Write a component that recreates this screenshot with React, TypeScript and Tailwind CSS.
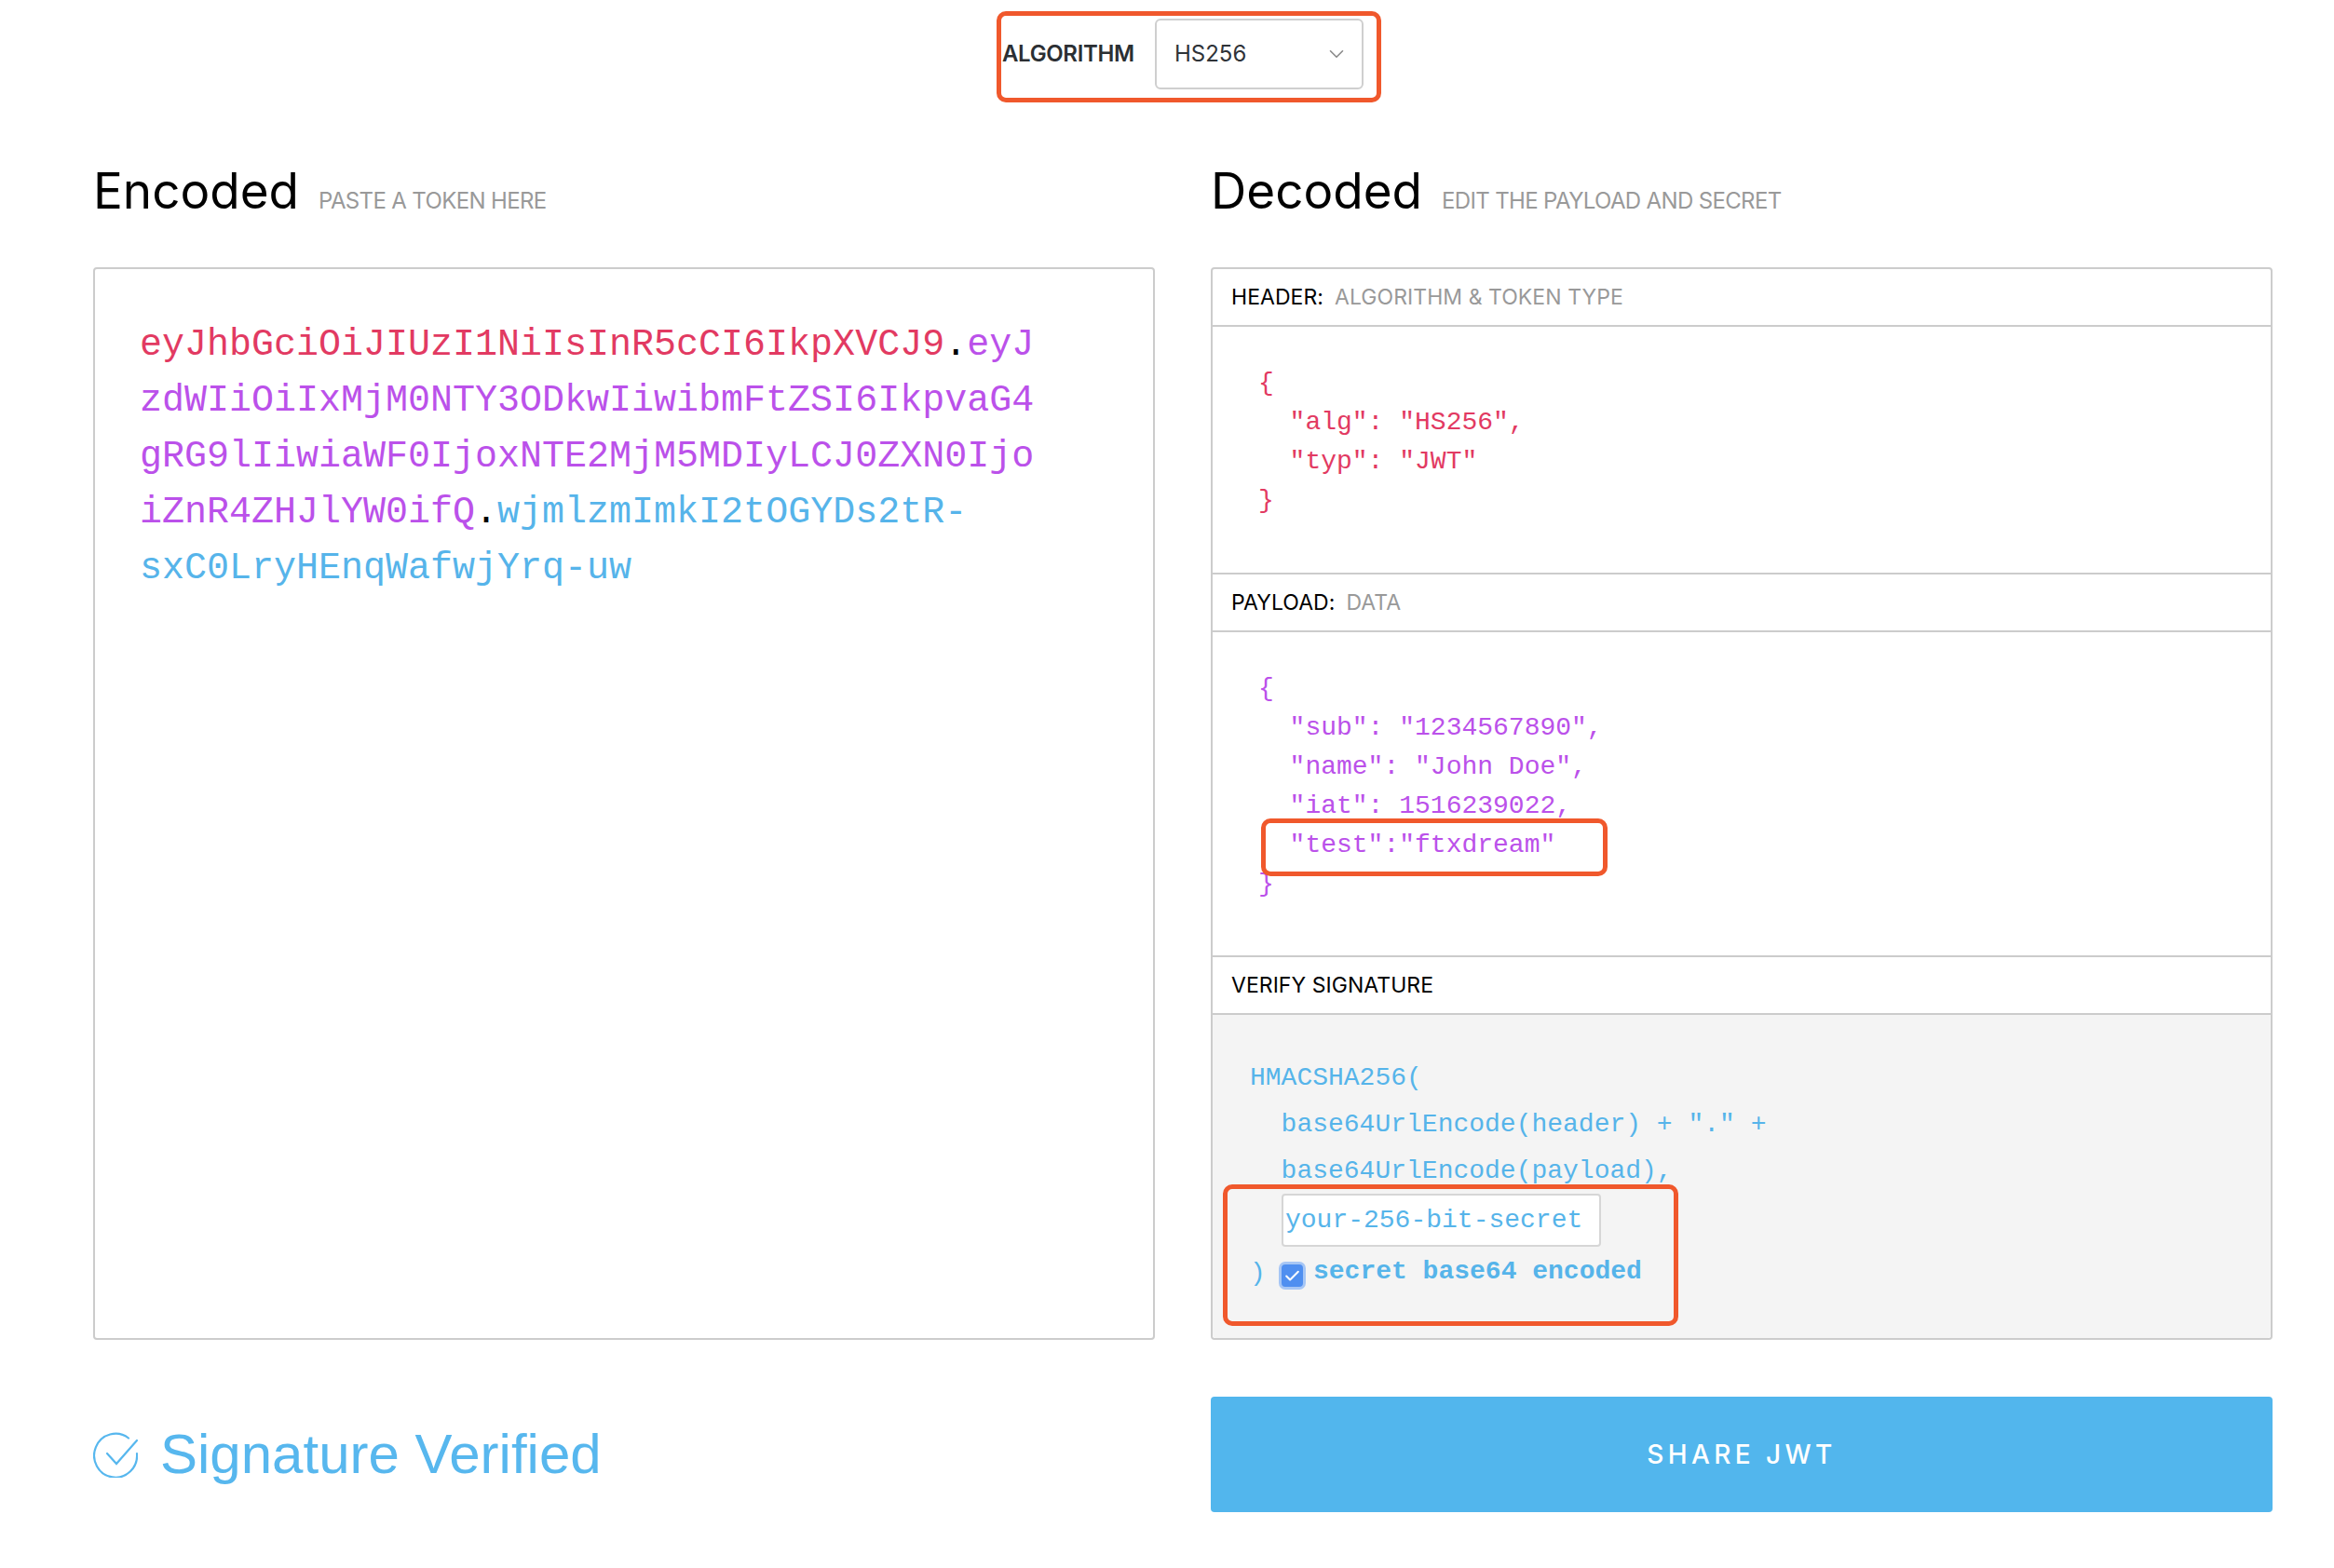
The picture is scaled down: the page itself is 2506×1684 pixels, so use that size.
import { Check, ChevronDown } from "lucide-react"
import type { ReactNode } from "react"

const sans = "font-['Inter','Liberation_Sans',sans-serif]"
const mono = "font-['Liberation_Mono',monospace]"

function RedBox({ className }: { className: string }) {
  return <div className={`absolute border-[5px] border-[#f0582c] rounded-[10px] pointer-events-none ${className}`} />
}

function SectionHeading({ title, hint }: { title: string; hint: string }) {
  return (
    <div className="h-[167px] flex items-baseline gap-[21px] pt-[53px]">
      <h2 className="text-[53px] leading-[64px] text-black font-normal">{title}</h2>
      <span className="text-[24px] text-[#999999] tracking-[-0.65px]">{hint}</span>
    </div>
  )
}

function PanelLabel({ label, hint }: { label: string; hint?: string }) {
  return (
    <div className="h-[60px] px-[20px] flex items-center gap-[12px] text-[23px] tracking-[0.05px]">
      <span className="text-black">{label}</span>
      {hint && <span className="text-[#999999]">{hint}</span>}
    </div>
  )
}

function JsonBlock({ lines, className }: { lines: ReactNode[]; className: string }) {
  return (
    <div className={`${mono} text-[28px] leading-[42px] whitespace-pre pl-[49px] ${className}`}>
      {lines.map((line, i) => (
        <div key={i}>{line}</div>
      ))}
    </div>
  )
}

export default function App() {
  return (
    <div className={`relative w-[2506px] h-[1684px] bg-white overflow-hidden ${sans}`}>
      {/* Algorithm picker */}
      <div className="h-[120px] pt-[20px] pl-[1076px] flex items-start gap-[22px]">
        <span className="w-[142px] h-[76px] flex items-center text-[24px] font-semibold text-[#2b2f33] tracking-[-0.35px]">ALGORITHM</span>
        <div className="w-[224px] h-[76px] border-2 border-[#cfcfcf] rounded-[6px] pl-[19px] pr-[14px] flex items-center justify-between text-[24px] text-[#2f3338]">
          HS256
          <ChevronDown className="w-[26px] h-[26px] text-[#8a8a8a]" strokeWidth={1.5} />
        </div>
      </div>

      <div className="grid grid-cols-[1140px_1140px] gap-x-[60px] pl-[100px]">
        {/* Encoded */}
        <div>
          <SectionHeading title="Encoded" hint="PASTE A TOKEN HERE" />
          <div className={`h-[1152px] border-2 border-[#cccccc] rounded-[4px] pl-[48px] pt-[52px] ${mono} text-[40px] leading-[60px] whitespace-pre`}>
            <span className="text-[#e23a62]">eyJhbGciOiJIUzI1NiIsInR5cCI6IkpXVCJ9</span>
            <span className="text-black">.</span>
            <span className="text-[#bb51ea]">
              eyJ
              <br />
              zdWIiOiIxMjM0NTY3ODkwIiwibmFtZSI6IkpvaG4
              <br />
              gRG9lIiwiaWF0IjoxNTE2MjM5MDIyLCJ0ZXN0Ijo
              <br />
              iZnR4ZHJlYW0ifQ
            </span>
            <span className="text-black">.</span>
            <span className="text-[#56b4ea]">
              wjmlzmImkI2tOGYDs2tR-
              <br />
              sxC0LryHEnqWafwjYrq-uw
            </span>
          </div>
          <div className="h-[245px] flex items-center gap-[24px]">
            <svg className="w-[48px] h-[50px] text-[#57b7ee]" viewBox="0 0 48 50" fill="none" stroke="currentColor" strokeWidth="2.2" strokeLinecap="round">
              <path d="M38 7.5A23 23.5 0 1 0 47 24" />
              <path d="M15 24l10 11L47 10" />
            </svg>
            <span className="font-['Liberation_Sans',sans-serif] text-[60px] leading-none text-[#57b7ee]">Signature Verified</span>
          </div>
        </div>

        {/* Decoded */}
        <div>
          <SectionHeading title="Decoded" hint="EDIT THE PAYLOAD AND SECRET" />
          <div className="h-[1152px] border-2 border-[#cccccc] rounded-[4px] flex flex-col">
            <PanelLabel label="HEADER:" hint="ALGORITHM & TOKEN TYPE" />
            <div className="h-[268px] border-y-2 border-[#cccccc] pt-[40px]">
              <JsonBlock
                className="text-[#e23a62]"
                lines={["{", '  "alg": "HS256",', '  "typ": "JWT"', "}"]}
              />
            </div>
            <PanelLabel label="PAYLOAD:" hint="DATA" />
            <div className="h-[351px] border-y-2 border-[#cccccc] pt-[40px]">
              <JsonBlock
                className="text-[#bb51ea]"
                lines={[
                  "{",
                  '  "sub": "1234567890",',
                  '  "name": "John Doe",',
                  '  "iat": 1516239022,',
                  '  "test":"ftxdream"',
                  "}",
                ]}
              />
            </div>
            <PanelLabel label="VERIFY SIGNATURE" />
            <div className={`flex-1 border-t-2 border-[#cccccc] bg-[#f4f4f4] rounded-b-[4px] pl-[40px] pt-[43px] ${mono} text-[28px] text-[#56b4ea]`}>
              <div className="leading-[50px] whitespace-pre">HMACSHA256(</div>
              <div className="leading-[50px] whitespace-pre">{'  base64UrlEncode(header) + "." +'}</div>
              <div className="leading-[50px] whitespace-pre">{"  base64UrlEncode(payload),"}</div>
              <input
                readOnly
                defaultValue="your-256-bit-secret"
                className="block ml-[34px] mt-[-1px] w-[343px] h-[57px] bg-white border-2 border-[#d6d6d6] rounded-[4px] pl-[2px] text-[#56b4ea] outline-none"
              />
              <div className="flex items-start mt-[7px] h-[50px]">
                <span className="leading-[44px] w-[31px]">)</span>
                <span className="mt-[9px] w-[29px] h-[30px] rounded-[7px] bg-[#4f8ff0] border-[3px] border-[#a6c6f5] flex items-center justify-center">
                  <Check className="w-[19px] h-[19px] text-white" strokeWidth={2.5} />
                </span>
                <span className="ml-[8px] leading-[40px] font-semibold whitespace-pre">secret base64 encoded</span>
              </div>
            </div>
          </div>
          <div className="mt-[61px] h-[124px] bg-[#52b6ed] rounded-[4px] flex items-center justify-center text-[28px] font-medium text-white tracking-[4.4px]">
            SHARE JWT
          </div>
        </div>
      </div>

      {/* Hand drawn annotations on top of the page */}
      <RedBox className="left-[1070px] top-[12px] w-[413px] h-[98px]" />
      <RedBox className="left-[1354px] top-[879px] w-[372px] h-[62px]" />
      <RedBox className="left-[1313px] top-[1272px] w-[489px] h-[152px]" />
    </div>
  )
}
